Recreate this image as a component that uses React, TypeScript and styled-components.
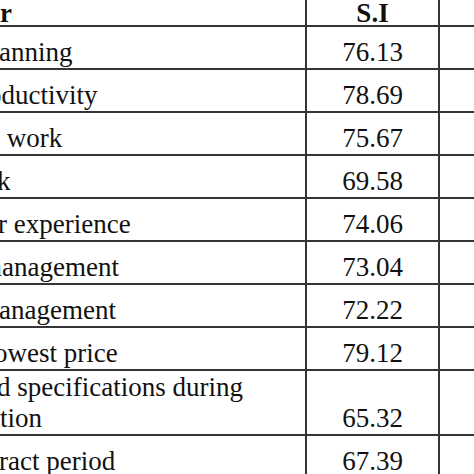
import React from 'react';
import styled, { createGlobalStyle } from 'styled-components';

type Line = { text: string; shift: number };
type Row = { lines: Line[]; value: string };

const rows: Row[] = [
  { lines: [{ text: 'anning', shift: -1 }], value: '76.13' },
  { lines: [{ text: 'oductivity', shift: -12 }], value: '78.69' },
  { lines: [{ text: ' work', shift: 0 }], value: '75.67' },
  { lines: [{ text: 'k', shift: -3 }], value: '69.58' },
  { lines: [{ text: 'r experience', shift: -2 }], value: '74.06' },
  { lines: [{ text: 'management', shift: -19 }], value: '73.04' },
  { lines: [{ text: 'anagement', shift: -1 }], value: '72.22' },
  { lines: [{ text: 'owest price', shift: -6 }], value: '79.12' },
  {
    lines: [
      { text: 'd specifications during', shift: -3 },
      { text: 'tion', shift: 0 },
    ],
    value: '65.32',
  },
  { lines: [{ text: 'ract period', shift: -1 }], value: '67.39' },
];

const GlobalStyle = createGlobalStyle`
  html, body {
    margin: 0;
    padding: 0;
    background: #ffffff;
    overflow: hidden;
  }
`;

const Table = styled.div`
  width: 540px;
  font-family: 'Liberation Serif', 'Times New Roman', serif;
  font-size: 27px;
  line-height: 31px;
  color: #111111;
`;

const TableRow = styled.div<{ $height: number }>`
  display: grid;
  grid-template-columns: 307px 133px 100px;
  height: ${({ $height }) => $height}px;
  box-sizing: border-box;
  border-bottom: 2px solid #353535;
`;

const Cell = styled.div`
  display: flex;
  flex-direction: column;
  justify-content: flex-end;
  box-sizing: border-box;
  border-right: 2px solid #353535;
`;

const NameCell = styled(Cell)`
  align-items: flex-start;
`;

const ValueCell = styled(Cell)`
  align-items: center;
`;

const HeadText = styled.span`
  font-weight: bold;
  line-height: 27px;
`;

const NameLine = styled.span<{ $shift: number }>`
  white-space: pre;
  margin-left: ${({ $shift }) => $shift}px;
`;

export default function App() {
  return (
    <>
      <GlobalStyle />
      <Table>
        <TableRow $height={27}>
          <NameCell>
            <HeadText>r</HeadText>
          </NameCell>
          <ValueCell>
            <HeadText>S.I</HeadText>
          </ValueCell>
          <Cell />
        </TableRow>
        {rows.map((row, i) => (
          <TableRow key={i} $height={row.lines.length > 1 ? 65 : 43}>
            <NameCell>
              {row.lines.map((line, j) => (
                <NameLine key={j} $shift={line.shift}>
                  {line.text}
                </NameLine>
              ))}
            </NameCell>
            <ValueCell>{row.value}</ValueCell>
            <Cell />
          </TableRow>
        ))}
      </Table>
    </>
  );
}
